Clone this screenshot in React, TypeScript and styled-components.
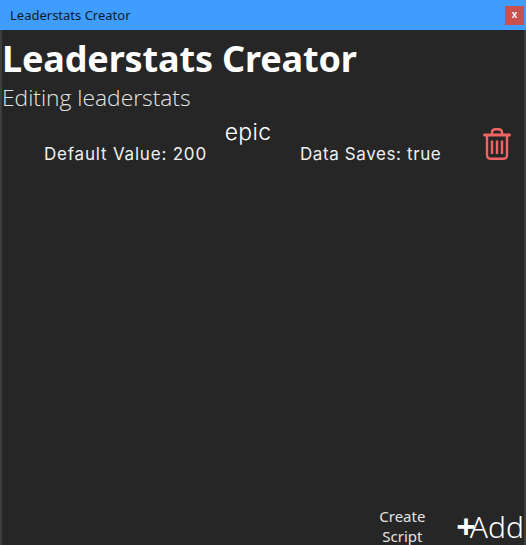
import React from "react";
import styled, { createGlobalStyle } from "styled-components";

const GlobalStyle = createGlobalStyle`
  html, body {
    margin: 0;
    padding: 0;
    background: #3a3a3a;
  }
`;

const Window = styled.div`
  width: 526px;
  height: 545px;
  display: flex;
  flex-direction: column;
  overflow: hidden;
  background: #3d3d3d;
  box-sizing: border-box;
`;

const TitleBar = styled.div`
  height: 30px;
  flex: none;
  display: flex;
  align-items: center;
  justify-content: space-between;
  padding: 0 2px 0 10px;
  background: #3f9dff;
`;

const TitleText = styled.span`
  font-family: "Noto Sans", sans-serif;
  font-size: 13px;
  color: #0c1a2c;
`;

const CloseButton = styled.div`
  width: 19px;
  height: 19px;
  display: flex;
  align-items: center;
  justify-content: center;
  background: #c75050;
  color: #fff;
  font-family: "Liberation Sans", sans-serif;
  font-weight: 700;
  font-size: 10px;
  line-height: 1;
`;

const Body = styled.div`
  flex: 1;
  margin: 0 2px;
  display: flex;
  flex-direction: column;
  background: #262626;
  font-family: "Noto Sans", sans-serif;
  color: #fff;
`;

const Heading = styled.h1`
  margin: 4px 0 0;
  font-size: 36px;
  line-height: 50px;
  font-weight: 700;
  letter-spacing: -0.15px;
`;

const SubHeading = styled.div`
  font-family: "Open Sans", sans-serif;
  font-size: 22.8px;
  line-height: 32px;
  font-weight: 300;
  color: #e4e4e4;
  margin-top: -2px;
`;

const StatRow = styled.div`
  position: relative;
  display: grid;
  grid-template-columns: 1fr 1fr;
  margin-top: 2px;
  height: 52px;
  font-family: "Inter", sans-serif;
`;

const StatName = styled.div`
  grid-column: 1 / 3;
  text-align: center;
  font-size: 23px;
  line-height: 24px;
  padding: 4px 30px 0 0;
  margin-bottom: -4px;
  font-weight: 300;
  letter-spacing: 0.3px;
`;

const StatValue = styled.div<{ $left: number; $spacing: number }>`
  font-size: 17px;
  line-height: 18px;
  padding-left: ${(p) => p.$left}px;
  white-space: nowrap;
  color: #f0f0f0;
  font-weight: 400;
  letter-spacing: ${(p) => p.$spacing}px;
`;

const TrashButton = styled.div`
  position: absolute;
  right: 13px;
  top: 12px;
  width: 28px;
  height: 32px;
`;

const Spacer = styled.div`
  flex: 1;
`;

const Footer = styled.div`
  display: flex;
  justify-content: flex-end;
  align-items: flex-end;
  height: 40px;
  overflow: hidden;
`;

const CreateScript = styled.div`
  width: 50px;
  text-align: center;
  font-size: 15px;
  line-height: 20px;
  color: #e4e4e4;
  margin-right: 29px;
  margin-bottom: -1px;
`;

const AddButton = styled.div`
  display: flex;
  align-items: center;
  height: 38px;
  font-size: 30px;
  font-weight: 300;
  color: #fff;
`;

const Plus = styled.span`
  font-weight: 700;
  font-size: 34px;
  line-height: 38px;
  margin-right: -6px;
`;

const TrashIcon = () => (
  <svg width="28" height="32" viewBox="0 0 28 32" fill="none" stroke="#f06464" strokeWidth="2.4">
    <path d="M1.5 7h25" strokeLinecap="round" strokeWidth="3" />
    <path d="M9 6V4.5C9 2.5 10.5 1.2 12.5 1.2h3C17.5 1.2 19 2.5 19 4.5V6" />
    <path d="M4 8v19c0 2.5 1.5 3.8 4 3.8h12c2.5 0 4-1.3 4-3.8V8" />
    <path d="M9 12.5v13.5M14 12.5v13.5M19 12.5v13.5" strokeWidth="2.4" />
  </svg>
);

const App = () => {
  return (
    <>
      <GlobalStyle />
      <Window>
        <TitleBar>
          <TitleText>Leaderstats Creator</TitleText>
          <CloseButton>x</CloseButton>
        </TitleBar>
        <Body>
          <Heading>Leaderstats Creator</Heading>
          <SubHeading>Editing leaderstats</SubHeading>
          <StatRow>
            <StatName>epic</StatName>
            <StatValue $left={42} $spacing={0.8}>Default Value: 200</StatValue>
            <StatValue $left={37} $spacing={0.6}>Data Saves: true</StatValue>
            <TrashButton>
              <TrashIcon />
            </TrashButton>
          </StatRow>
          <Spacer />
          <Footer>
            <CreateScript>Create Script</CreateScript>
            <AddButton>
              <Plus>+</Plus>Add
            </AddButton>
          </Footer>
        </Body>
      </Window>
    </>
  );
};

export default App;
